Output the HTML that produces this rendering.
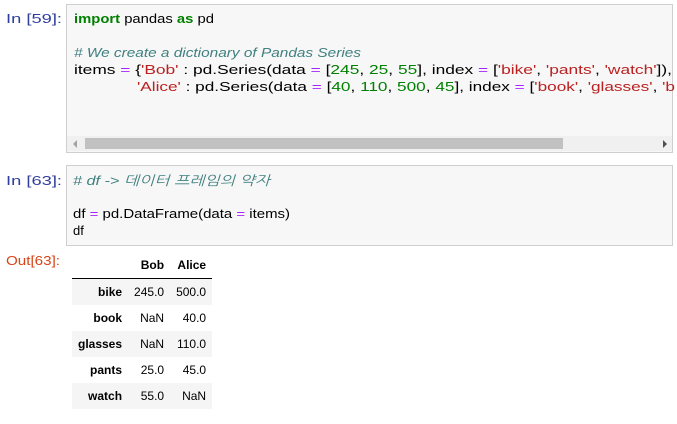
<!DOCTYPE html>
<html><head><meta charset="utf-8"><style>
body{margin:0;width:677px;height:424px;background:#fff;overflow:hidden;position:relative;font-family:"Liberation Sans","NanumGothic",sans-serif}
.box{position:absolute;background:#f7f7f7;border:1px solid #cfcfcf;box-sizing:border-box}
svg{position:absolute;left:0;top:0}
.k{fill:#008000;font-weight:bold}.n{fill:#008000}.s{fill:#ba2121}.o{fill:#aa22ff}.c{fill:#408080;font-style:italic}
table{position:absolute;left:72px;top:252px;border-collapse:collapse;font-size:12px;color:#000}
td,th{height:26px;padding:0 6px;text-align:right}
th{font-weight:bold}
thead th{border-bottom:1px solid #000}
tbody tr:nth-child(odd){background:#f5f5f5}
</style></head><body>
<div class="box" style="left:66px;top:4px;width:607px;height:149px"></div>
<div style="position:absolute;left:67px;top:136px;width:605px;height:15px;background:#f0f0f0"></div>
<div style="position:absolute;left:85px;top:138px;width:478px;height:11px;background:#c1c1c1"></div>
<div style="position:absolute;left:73px;top:140px;width:0;height:0;border:4px solid transparent;border-right-color:#a3a3a3;border-left:0"></div>
<div style="position:absolute;left:663px;top:140px;width:0;height:0;border:4px solid transparent;border-left-color:#505050;border-right:0"></div>
<div class="box" style="left:66px;top:165px;width:607px;height:81px"></div>
<svg width="677" height="424" font-family="Liberation Sans, NanumGothic, sans-serif" font-size="13">
<text x="6" y="23" fill="#303f9f" textLength="56" lengthAdjust="spacingAndGlyphs">In [59]:</text>
<text x="74" y="23" textLength="140" lengthAdjust="spacingAndGlyphs"><tspan class="k">import</tspan> pandas <tspan class="k">as</tspan> pd</text>
<text x="74" y="57" class="c" textLength="287" lengthAdjust="spacingAndGlyphs"># We create a dictionary of Pandas Series</text>
<text x="74" y="74" textLength="598" lengthAdjust="spacingAndGlyphs">items <tspan class="o">=</tspan> {<tspan class="s">'Bob'</tspan> : pd.Series(data <tspan class="o">=</tspan> [<tspan class="n">245</tspan>, <tspan class="n">25</tspan>, <tspan class="n">55</tspan>], index <tspan class="o">=</tspan> [<tspan class="s">'bike'</tspan>, <tspan class="s">'pants'</tspan>, <tspan class="s">'watch'</tspan>]),</text>
<text x="137" y="91" textLength="538" lengthAdjust="spacingAndGlyphs"><tspan class="s">'Alice'</tspan> : pd.Series(data <tspan class="o">=</tspan> [<tspan class="n">40</tspan>, <tspan class="n">110</tspan>, <tspan class="n">500</tspan>, <tspan class="n">45</tspan>], index <tspan class="o">=</tspan> [<tspan class="s">'book'</tspan>, <tspan class="s">'glasses'</tspan>, <tspan class="s">'b</tspan></text>
<text x="6" y="185" fill="#303f9f" textLength="56" lengthAdjust="spacingAndGlyphs">In [63]:</text>
<text x="73" y="185" class="c" textLength="197" lengthAdjust="spacingAndGlyphs"># df -&gt; 데이터 프레임의 약자</text>
<text x="73" y="218" textLength="217" lengthAdjust="spacingAndGlyphs">df <tspan class="o">=</tspan> pd.DataFrame(data <tspan class="o">=</tspan> items)</text>
<text x="73" y="235">df</text>
<text x="6" y="265" fill="#d84315" textLength="54" lengthAdjust="spacingAndGlyphs">Out[63]:</text>
</svg>
<table>
<thead><tr><th></th><th>Bob</th><th>Alice</th></tr></thead>
<tbody>
<tr><th>bike</th><td>245.0</td><td>500.0</td></tr>
<tr><th>book</th><td>NaN</td><td>40.0</td></tr>
<tr><th>glasses</th><td>NaN</td><td>110.0</td></tr>
<tr><th>pants</th><td>25.0</td><td>45.0</td></tr>
<tr><th>watch</th><td>55.0</td><td>NaN</td></tr>
</tbody></table>
</body></html>
